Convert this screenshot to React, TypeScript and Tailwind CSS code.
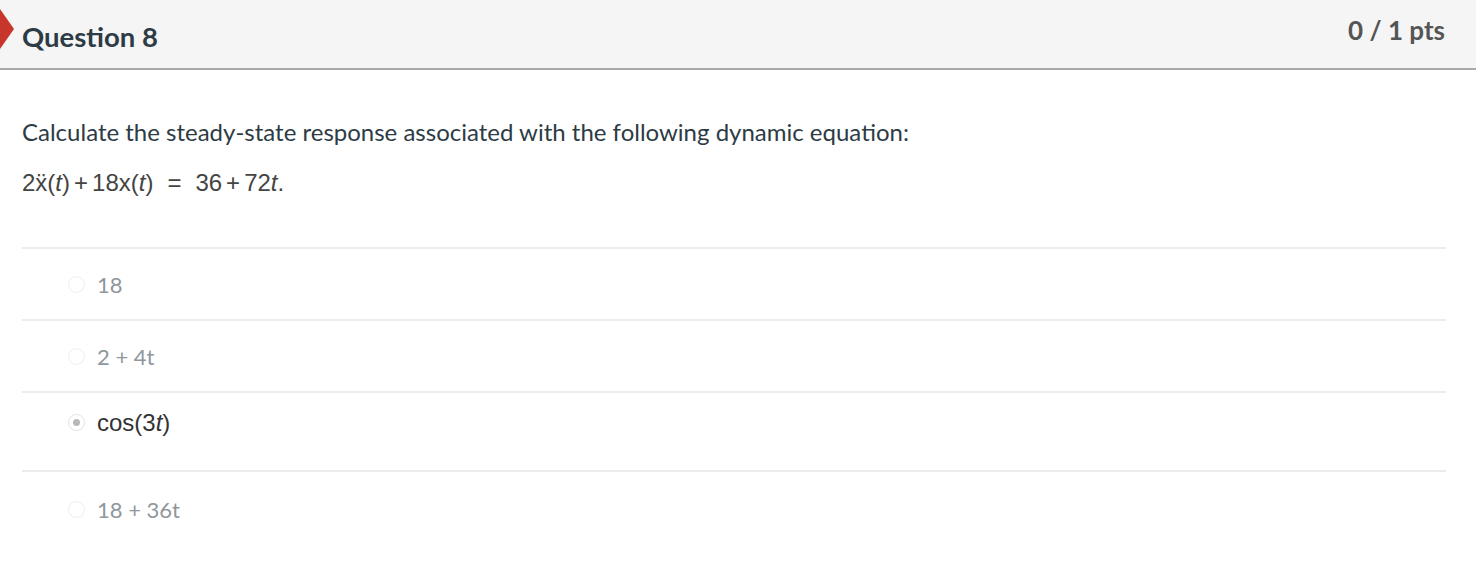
import * as React from "react";

const answers = [
  { id: "a", label: "18", math: false },
  { id: "b", label: "2 + 4t", math: false },
  { id: "c", label: "cos(3t)", math: true },
  { id: "d", label: "18 + 36t", math: false },
];

function Radio({ checked }: { checked: boolean }) {
  return (
    <span
      className={
        "flex h-[17px] w-[17px] shrink-0 items-center justify-center rounded-full border bg-white " +
        (checked ? "border-[#e2e2e2]" : "border-[#ededed]")
      }
    >
      {checked && <span className="h-[7px] w-[7px] rounded-full bg-[#b8b8b8]" />}
    </span>
  );
}

export default function App() {
  const selected = "c";

  return (
    <div className="h-[572px] w-[1476px] bg-white font-['Lato',sans-serif]">
      <div className="relative flex h-[70px] items-start justify-between border-b-2 border-[#a9a9a9] bg-[#f5f5f5] pl-[22px] pr-[31px]">
        <svg className="absolute left-0 top-[9px]" width="15" height="40" viewBox="0 0 15 40">
          <polygon points="0,0 14,20 0,40" fill="#c8352b" />
        </svg>
        <h2 className="mt-[20px] text-[27.5px] font-bold leading-[34px] text-[#2d3b45]">Question 8</h2>
        <div className="mt-[14px] text-[26px] font-bold leading-[32px] text-[#555]">0 / 1 pts</div>
      </div>

      <div className="px-[22px] pr-[30px]">
        <p className="mt-[46px] text-[24px] leading-[32px] text-[#2d3b45]">
          Calculate the steady-state response associated with the following dynamic equation:
        </p>
        <p className="mt-[20px] flex items-baseline font-['Liberation_Sans',Arial,sans-serif] text-[24px] leading-[30px] text-[#444]">
          <span>2x&#776;(<i>t</i>)</span>
          <span className="mx-[4px]">+</span>
          <span>18x(<i>t</i>)</span>
          <span className="mx-[14px]">=</span>
          <span>36</span>
          <span className="mx-[4px]">+</span>
          <span>72<i>t</i>.</span>
        </p>

        <div className="mt-[49px] border-t-2 border-[#ececec]">
          {answers.map((a, i) => {
            const checked = a.id === selected;
            return (
              <div
                key={a.id}
                className={
                  "flex items-center gap-[12px] pl-[46px] " +
                  (i < answers.length - 1 ? "border-b-2 border-[#ececec] " : "") +
                  (checked ? "h-[79px] pb-[18px]" : i === 3 ? "h-[74px]" : "h-[72px]")
                }
              >
                <Radio checked={checked} />
                {a.math ? (
                  <span className="font-['Liberation_Sans',Arial,sans-serif] text-[24px] text-[#333]">
                    cos(3<i>t</i>)
                  </span>
                ) : (
                  <span className="text-[22px] text-[#8f979d]">{a.label}</span>
                )}
              </div>
            );
          })}
        </div>
      </div>
    </div>
  );
}
